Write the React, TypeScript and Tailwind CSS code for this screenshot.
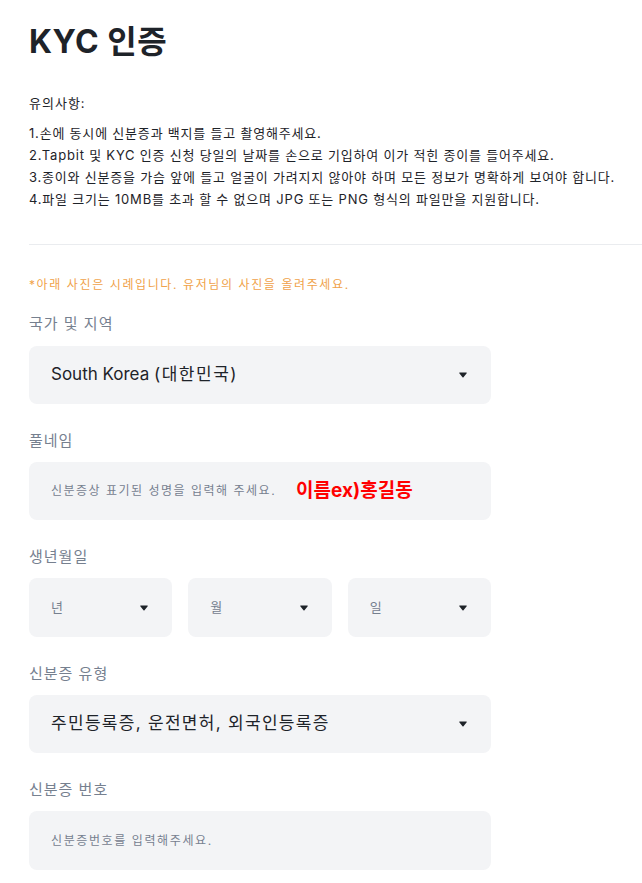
const font = { fontFamily: 'Inter, "Noto Sans CJK KR", sans-serif' };

function Caret() {
    return (
        <svg width="8" height="6" viewBox="0 0 8 6" className="shrink-0">
            <path d="M0.6 0.5h6.8a0.4 0.4 0 0 1 0.3 0.65L4.5 5.2a0.7 0.7 0 0 1-1 0L0.3 1.15A0.4 0.4 0 0 1 0.6 0.5z" fill="#1e2329" />
        </svg>
    );
}

function Label({ children }: { children: React.ReactNode }) {
    return <p className="mt-[27px] mb-[11px] text-[15px] leading-5 tracking-[1px] text-[#76808f]">{children}</p>;
}

function SelectBox({ value, small }: { value: React.ReactNode; small?: boolean }) {
    return (
        <div className="flex h-full min-h-[58px] items-center justify-between rounded-lg bg-[#f3f4f6] pl-[22px] pr-6">
            <span className={small ? 'text-[13px] text-[#76808f]' : 'text-[17px] text-[#1e2329]'}>{value}</span>
            <Caret />
        </div>
    );
}

export default function App() {
    const notes = [
        '1.손에 동시에 신분증과 백지를 들고 촬영해주세요.',
        '2.Tapbit 및 KYC 인증 신청 당일의 날짜를 손으로 기입하여 이가 적힌 종이를 들어주세요.',
        '3.종이와 신분증을 가슴 앞에 들고 얼굴이 가려지지 않아야 하며 모든 정보가 명확하게 보여야 합니다.',
        '4.파일 크기는 10MB를 초과 할 수 없으며 JPG 또는 PNG 형식의 파일만을 지원합니다.',
    ];

    return (
        <div className="min-h-screen overflow-hidden bg-white pl-[29px]" style={font}>
            <h1 className="mt-[22px] text-[32px] font-bold leading-10 tracking-[0.5px] text-[#1e2329]">KYC 인증</h1>
            <p className="mt-[30px] text-[13px] leading-[22px] tracking-[1px] text-[#1e2329]">유의사항:</p>
            <div className="mt-2 text-[13px] leading-[22px] tracking-[0.8px] text-[#1e2329]">
                {notes.map((n) => (
                    <p key={n} className="whitespace-nowrap">{n}</p>
                ))}
            </div>
            <div className="mt-[34px] h-px w-[640px] bg-[#eaecef]" />

            <div className="w-[462px]">
                <p className="mt-[30px] whitespace-nowrap text-[12px] leading-5 tracking-[1.6px] text-[#f0a24a]">*아래 사진은 시례입니다. 유저님의 사진을 올려주세요.</p>

                <p className="mt-[19px] mb-3 text-[15px] leading-5 tracking-[1px] text-[#76808f]">국가 및 지역</p>
                <div className="h-[58px]">
                    <SelectBox value={<>South Korea <span className="tracking-[1.5px]">(대한민국)</span></>} />
                </div>

                <Label>풀네임</Label>
                <div className="flex h-[58px] items-center gap-[20px] rounded-lg bg-[#f3f4f6] pl-[22px]">
                    <span className="whitespace-nowrap text-[12px] tracking-[1.5px] text-[#76808f]">신분증상 표기된 성명을 입력해 주세요.</span>
                    <span className="whitespace-nowrap text-[19px] font-bold text-[#ff0000]">이름ex)홍길동</span>
                </div>

                <Label>생년월일</Label>
                <div className="grid h-[59px] grid-cols-3 gap-4">
                    <SelectBox value="년" small />
                    <SelectBox value="월" small />
                    <SelectBox value="일" small />
                </div>

                <Label>신분증 유형</Label>
                <div className="h-[58px]">
                    <SelectBox value={<span className="tracking-[1.3px]">주민등록증, 운전면허, 외국인등록증</span>} />
                </div>

                <Label>신분증 번호</Label>
                <div className="flex h-[59px] items-center rounded-lg bg-[#f3f4f6] pl-[22px]">
                    <span className="text-[12px] tracking-[1.6px] text-[#76808f]">신분증번호를 입력해주세요.</span>
                </div>
            </div>
        </div>
    );
}
